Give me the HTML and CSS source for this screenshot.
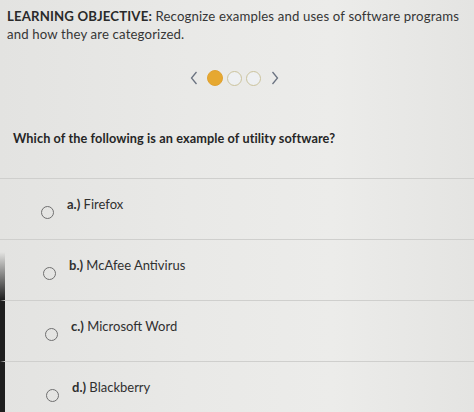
FILE: index.html
```html
<!DOCTYPE html>
<html>
<head>
<meta charset="utf-8">
<link rel="stylesheet" href="styles.css">
</head>
<body>
<div class="page">
  <p class="objective"><b class="label">LEARNING OBJECTIVE:</b> <span class="desc">Recognize examples and uses of software programs and how they are categorized.</span></p>
  <div class="pager">
    <span class="chev">
      <svg width="8" height="14" viewBox="0 0 8 14"><path d="M6.5 1 L1.5 7 L6.5 13" fill="none" stroke="#6a7280" stroke-width="1.3"/></svg>
    </span>
    <span class="dot active"></span>
    <span class="dot"></span>
    <span class="dot"></span>
    <span class="chev">
      <svg width="8" height="14" viewBox="0 0 8 14"><path d="M1.5 1 L6.5 7 L1.5 13" fill="none" stroke="#6a7280" stroke-width="1.3"/></svg>
    </span>
  </div>
  <div class="question">Which of the following is an example of utility software?</div>
  <div class="options">
    <div class="option o1"><span class="radio"></span><span class="text"><b>a.)</b> Firefox</span></div>
    <div class="option o2"><span class="radio"></span><span class="text"><b>b.)</b> McAfee Antivirus</span></div>
    <div class="option o3"><span class="radio"></span><span class="text"><b>c.)</b> Microsoft Word</span></div>
    <div class="option o4"><span class="radio"></span><span class="text"><b>d.)</b> Blackberry</span></div>
  </div>
</div>
</body>
</html>
```
FILE: styles.css
```css
html, body {
  margin: 0;
  padding: 0;
}
body {
  width: 474px;
  height: 412px;
  overflow: hidden;
  background: linear-gradient(90deg, #e3e3e1 0%, #e9e9e7 40%, #ececea 70%, #e4e4e2 100%);
  font-family: Lato, "Open Sans", sans-serif;
  color: #2c2c2c;
}
.page {
  height: 412px;
}
.objective {
  margin: 0;
  padding: 7px 0 0 7px;
  font-size: 13.2px;
  line-height: 18px;
  letter-spacing: 0.15px;
  color: #363636;
}
.label {
  font-weight: 700;
  color: #2a2a2a;
}
.pager {
  display: flex;
  align-items: center;
  gap: 4px;
  margin-top: 23px;
  padding-left: 189px;
  height: 24px;
}
.chev {
  display: flex;
  margin: 0 5px 0 1px;
}
.chev:last-child {
  margin: 0 1px 0 6px;
}
.dot {
  width: 15px;
  height: 15px;
  border-radius: 50%;
  border: 1.5px solid #cbc39c;
  background: #eef0f2;
  box-sizing: border-box;
}
.dot.active {
  background: #e6a830;
  border-color: #e0a232;
  width: 16px;
  height: 16px;
}
.question {
  margin-top: 39px;
  padding-left: 13px;
  font-size: 12.7px;
  line-height: 18px;
  font-weight: 700;
  letter-spacing: 0.1px;
  color: #262626;
}
.options {
  margin-top: 31px;
}
.option {
  height: 60px;
  border-top: 1px solid #cfcfcd;
  display: flex;
  align-items: flex-start;
  font-size: 13px;
  color: #303030;
}
.option .radio {
  width: 11px;
  height: 11px;
  border: 1.5px solid #6f6f6f;
  border-radius: 50%;
  margin-top: 27px;
  flex: none;
}
.option .text {
  margin-top: 17px;
  margin-left: 13px;
}
.option b {
  font-weight: 700;
}
.o1 { padding-left: 41px; }
.o2 {
  padding-left: 43px;
  background: linear-gradient(180deg, rgba(30,30,30,0) 20%, #1e1e1e 100%) no-repeat left top / 5px 100%;
}
.o3, .o4 { border-left: 5px solid #1e1e1e; }
.o3 { padding-left: 40px; }
.o4 { padding-left: 41px; }
```
